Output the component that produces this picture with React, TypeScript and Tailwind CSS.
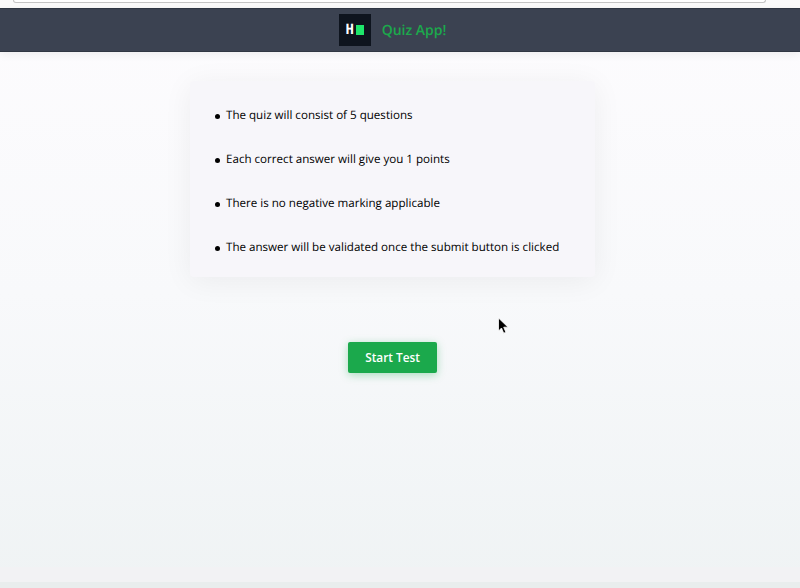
import React from 'react';

const rules = [
  'The quiz will consist of 5 questions',
  'Each correct answer will give you 1 points',
  'There is no negative marking applicable',
  'The answer will be validated once the submit button is clicked',
];

const App: React.FC = () => {
  return (
    <div className="relative h-[588px] w-[800px] overflow-hidden bg-gradient-to-b from-[#fdfcfe] via-[#f8f9fb] to-[#eff3f4] font-['Open_Sans',sans-serif] [text-rendering:geometricPrecision]">
      {/* browser chrome left over at top of the capture */}
      <div className="h-2 bg-[#fafafa]">
        <div className="ml-[13px] h-[3px] w-[753px] rounded-b-md border-x border-b border-[#c4c4c4] bg-white" />
      </div>

      <header className="flex h-[44px] items-center justify-center border-y border-[#2f3642] bg-[#3b4251] pr-[15px] shadow-[0_3px_8px_rgba(0,0,0,0.06)]">
        <div className="flex items-center gap-[11px]">
          <div className="flex h-8 w-8 items-center justify-center gap-[2px] bg-[#0e141e]">
            <span className="text-[14px] leading-none font-bold text-white font-['DejaVu_Sans_Mono',monospace]">H</span>
            <span className="h-[10px] w-[8px] bg-[#1ee66b]" />
          </div>
          <span className="text-[14px] font-semibold text-[#1ba94c]">Quiz App!</span>
        </div>
      </header>

      <main className="flex w-[785px] flex-col items-center">
        <ul className="mt-[29px] flex h-[196px] w-[405px] flex-col gap-[26px] rounded bg-[#f7f6fa] pt-[26px] pr-4 pl-[25px] text-[11.6px] text-black shadow-[0_4px_30px_rgba(0,0,0,0.06)]">
          {rules.map((rule) => (
            <li key={rule} className="flex items-center gap-[6px] leading-[18px]">
              <span className="h-[5px] w-[5px] shrink-0 rounded-full bg-black" />
              {rule}
            </li>
          ))}
        </ul>

        <button className="mt-[65px] h-[31px] w-[89px] rounded-[2px] bg-[#1ba94c] text-[11.8px] font-semibold text-white shadow-[0_2px_8px_rgba(27,169,76,0.35)]">
          Start Test
        </button>
      </main>

      {/* mouse cursor captured in the recording */}
      <svg className="absolute top-[317px] left-[497px]" width="12" height="18" viewBox="0 0 12 18">
        <path d="M1.5 1v13l3-3 2.2 5.2 2.2-1-2.2-5h4.3z" fill="#000" stroke="#fff" strokeWidth="0.8" />
      </svg>

      <div className="absolute inset-x-0 bottom-[6px] h-[15px] bg-[#f2f2f4]" />
      <div className="absolute inset-x-0 bottom-0 h-[6px] bg-[#e9eded]" />
    </div>
  );
};

export default App;
